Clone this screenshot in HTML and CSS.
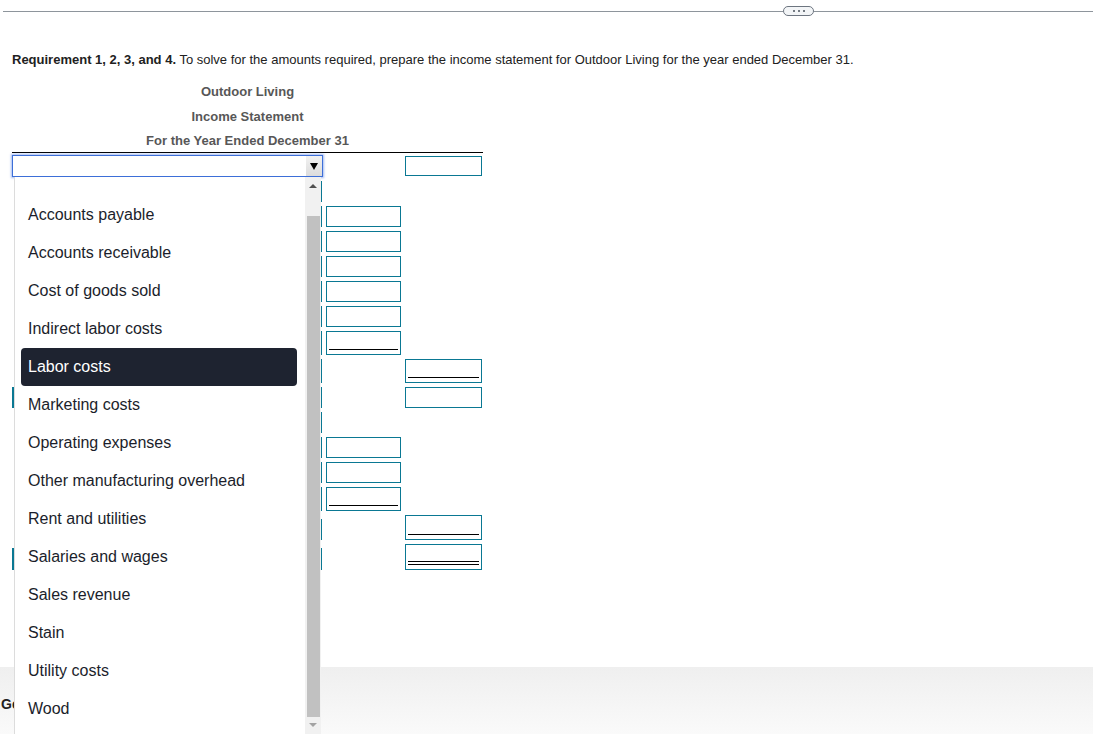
FILE: index.html
```html
<!DOCTYPE html>
<html lang="en">
<head>
<meta charset="utf-8">
<title>Income Statement</title>
<link rel="stylesheet" href="styles.css">
</head>
<body>
<main class="main">
  <div class="topbar">
    <span class="rule rule-left"></span>
    <span class="pill"><i></i><i></i><i></i></span>
    <span class="rule rule-right"></span>
  </div>

  <p class="req"><b>Requirement 1, 2, 3, and 4.</b> To solve for the amounts required, prepare the income statement for Outdoor Living for the year ended December 31.</p>

  <div class="statement">
    <div class="heading">
      <div class="hl">Outdoor Living</div>
      <div class="hl">Income Statement</div>
      <div class="hl last">For the Year Ended December 31</div>
    </div>

    <div class="rows">
      <div class="row r22">
        <div class="c1 select-wrap">
          <div class="select"><span class="arrow"><span class="tri"></span></span></div>
          <div class="listbox">
            <ul class="items">
              <li class="item">Accounts payable</li>
              <li class="item">Accounts receivable</li>
              <li class="item">Cost of goods sold</li>
              <li class="item">Indirect labor costs</li>
              <li class="item active">Labor costs</li>
              <li class="item">Marketing costs</li>
              <li class="item">Operating expenses</li>
              <li class="item">Other manufacturing overhead</li>
              <li class="item">Rent and utilities</li>
              <li class="item">Salaries and wages</li>
              <li class="item">Sales revenue</li>
              <li class="item">Stain</li>
              <li class="item">Utility costs</li>
              <li class="item">Wood</li>
            </ul>
            <div class="sb">
              <span class="sb-up"></span>
              <span class="sb-thumb"></span>
              <span class="sb-down"></span>
            </div>
          </div>
        </div>
        <div class="c2"></div>
        <div class="c3"><div class="box top1"></div></div>
      </div>

      <div class="row"><div class="c1"><div class="box indent"></div></div><div class="c2"></div><div class="c3"></div></div>
      <div class="row"><div class="c1"><div class="box indent"></div></div><div class="c2"><div class="box"></div></div><div class="c3"></div></div>
      <div class="row"><div class="c1"><div class="box indent"></div></div><div class="c2"><div class="box"></div></div><div class="c3"></div></div>
      <div class="row"><div class="c1"><div class="box indent"></div></div><div class="c2"><div class="box"></div></div><div class="c3"></div></div>
      <div class="row"><div class="c1"><div class="box indent"></div></div><div class="c2"><div class="box"></div></div><div class="c3"></div></div>
      <div class="row"><div class="c1"><div class="box indent"></div></div><div class="c2"><div class="box"></div></div><div class="c3"></div></div>
      <div class="row r24"><div class="c1"><div class="box indent"></div></div><div class="c2"><div class="box uline"></div></div><div class="c3"></div></div>
      <div class="row r24"><div class="c1"><div class="box indent"></div></div><div class="c2"></div><div class="c3"><div class="box uline"></div></div></div>
      <div class="row"><div class="c1"><div class="box flush"></div></div><div class="c2"></div><div class="c3"><div class="box"></div></div></div>
      <div class="row"><div class="c1"><div class="box indent"></div></div><div class="c2"></div><div class="c3"></div></div>
      <div class="row"><div class="c1"><div class="box indent"></div></div><div class="c2"><div class="box"></div></div><div class="c3"></div></div>
      <div class="row"><div class="c1"><div class="box indent"></div></div><div class="c2"><div class="box"></div></div><div class="c3"></div></div>
      <div class="row r24"><div class="c1"><div class="box indent"></div></div><div class="c2"><div class="box uline"></div></div><div class="c3"></div></div>
      <div class="row r25"><div class="c1"><div class="box indent short"></div></div><div class="c2"></div><div class="c3"><div class="box uline"></div></div></div>
      <div class="row r26"><div class="c1"><div class="box flush short"></div></div><div class="c2"></div><div class="c3"><div class="box dline"></div></div></div>
    </div>
  </div>
</main>
<footer class="footer">
  <span class="help">Get more help</span>
</footer>
</body>
</html>
```

FILE: styles.css
```css
* { box-sizing: border-box; }

html, body {
  margin: 0;
  padding: 0;
  background: #ffffff;
  font-family: "Liberation Sans", Arial, sans-serif;
  color: #212121;
  overflow: hidden;
}

.main {
  height: 667px;
  padding-top: 6px;
}

/* top separator */
.topbar {
  display: flex;
  align-items: center;
  height: 10px;
}
.rule {
  height: 1px;
  background: #8e959c;
}
.rule-left {
  margin-left: 3px;
  width: 780px;
}
.rule-right {
  flex: 1;
}
.pill {
  width: 31px;
  height: 10px;
  border: 1px solid #6d7580;
  border-radius: 5px;
  background: #f3f5f7;
  display: flex;
  align-items: center;
  justify-content: center;
  gap: 3px;
}
.pill i {
  width: 2px;
  height: 2px;
  background: #4a525c;
  border-radius: 1px;
}

.req {
  margin: 36px 0 0 12px;
  font-size: 13px;
  line-height: 16px;
  color: #212121;
}

.statement {
  margin: 11px 0 0 12px;
  width: 471px;
}
.heading {
  border-bottom: 1px solid #000;
  text-align: center;
  font-size: 13px;
  font-weight: bold;
  color: #575757;
}
.hl { line-height: 25px; }
.hl.last { line-height: 23px; }

.rows {
  padding-top: 2px;
  display: flex;
  flex-direction: column;
  gap: 4px;
}
.row {
  display: grid;
  grid-template-columns: 310px 75px 77px;
  column-gap: 4px;
  height: 21px;
}
.row.r22 { height: 22px; }
.row.r24 { height: 24px; }
.row.r25 { height: 25px; }
.row.r26 { height: 26px; }

.c1, .c2, .c3 {
  display: flex;
  flex-direction: column;
}

.box {
  flex: 1;
  border: 1px solid #0a7893;
  background: #fff;
  position: relative;
}
.box.top1 { margin-top: 1px; margin-bottom: 1px; }
.box.indent { margin-left: 12px; }
.box.flush { margin-left: 0; border-left-width: 2px; }
.box.short { margin-top: 4px; }

.box.uline::after {
  content: "";
  position: absolute;
  left: 2px;
  right: 2px;
  bottom: 4px;
  height: 1px;
  background: #000;
}
.box.dline::before,
.box.dline::after {
  content: "";
  position: absolute;
  left: 2px;
  right: 2px;
  height: 1px;
  background: #000;
}
.box.dline::before { bottom: 7px; }
.box.dline::after { bottom: 4px; }

/* select with open list */
.select-wrap {
  position: relative;
}
.select {
  flex: 1;
  width: 311px;
  border: 1px solid #3d6fd8;
  box-shadow: 0 0 2px 1px rgba(88, 130, 230, 0.55);
  background: #fff;
  display: flex;
  justify-content: flex-end;
}
.arrow {
  width: 16px;
  background: linear-gradient(#f2f2f2, #dcdcdc);
  display: flex;
  align-items: center;
  justify-content: center;
}
.tri {
  width: 0;
  height: 0;
  border-left: 4px solid transparent;
  border-right: 4px solid transparent;
  border-top: 7px solid #000;
}

.listbox {
  position: absolute;
  top: 22px;
  left: 2px;
  width: 307px;
  height: 557px;
  background: #fff;
  border-left: 1px solid #dcdcdc;
  display: flex;
  z-index: 10;
}
.items {
  list-style: none;
  margin: 0;
  padding: 19px 8px 0 6px;
  flex: 1;
}
.item {
  height: 38px;
  line-height: 38px;
  padding-left: 7px;
  font-size: 16px;
  color: #1b1e2b;
  border-radius: 4px;
  white-space: nowrap;
}
.item.active {
  background: #1e2330;
  color: #ffffff;
}

.sb {
  width: 16px;
  background: #f1f1f1;
  display: flex;
  flex-direction: column;
  align-items: center;
}
.sb-up {
  margin-top: 7px;
  width: 0;
  height: 0;
  border-left: 4px solid transparent;
  border-right: 4px solid transparent;
  border-bottom: 4px solid #505050;
}
.sb-thumb {
  margin-top: 28px;
  width: 13px;
  height: 501px;
  background: #c1c1c1;
}
.sb-down {
  margin-top: 6px;
  width: 0;
  height: 0;
  border-left: 4px solid transparent;
  border-right: 4px solid transparent;
  border-top: 4px solid #a3a3a3;
}

.footer {
  height: 67px;
  background: linear-gradient(#efefef, #fafafa);
  padding: 28px 0 0 1px;
}
.help {
  font-size: 14px;
  font-weight: bold;
  color: #222;
  line-height: 16px;
}
```
